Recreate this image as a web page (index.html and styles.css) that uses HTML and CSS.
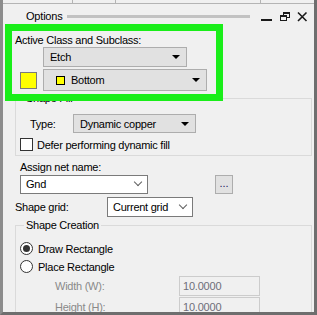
FILE: index.html
```html
<!DOCTYPE html>
<html lang="en">
<head>
    <meta charset="UTF-8">
    <title>Options</title>
    <link rel="stylesheet" href="styles.css">
</head>
<body>
    <div class="window">
        <div class="top-strip">
            <span class="tick tick-a"></span>
            <span class="tick tick-b"></span>
            <span class="tick tick-c"></span>
        </div>

        <div class="titlebar">
            <span class="title">Options</span>
            <span class="grip"></span>
            <svg class="win-buttons" width="47" height="24" viewBox="0 0 47 24">
                <!-- minimize -->
                <rect x="0" y="15" width="11" height="2" fill="#1a1a1a"/>
                <!-- restore -->
                <rect x="22.5" y="8.5" width="6" height="5" fill="none" stroke="#1a1a1a"/>
                <rect x="22" y="8" width="7" height="2" fill="#1a1a1a"/>
                <rect x="19.5" y="11.5" width="6" height="5" fill="#f0f0f0" stroke="#1a1a1a"/>
                <rect x="19" y="11" width="7" height="2" fill="#1a1a1a"/>
                <!-- close -->
                <path d="M37 8.5 L45.5 17 M45.5 8.5 L37 17" stroke="#1a1a1a" stroke-width="1.6" fill="none"/>
            </svg>
        </div>

        <div class="panel">
            <div class="label active-label">Active Class and Subclass:</div>

            <div class="row class-row">
                <div class="dropdown dd-class">
                    <span class="dd-text">Etch</span>
                    <span class="arrow"></span>
                </div>
            </div>

            <div class="row subclass-row">
                <span class="swatch"></span>
                <div class="dropdown dd-subclass">
                    <span class="mini-swatch"></span>
                    <span class="dd-text">Bottom</span>
                    <span class="arrow"></span>
                </div>
            </div>

            <fieldset class="group group-fill">
                <legend>Shape Fill</legend>
                <div class="row type-row">
                    <span class="label type-label">Type:</span>
                    <div class="dropdown dd-type">
                        <span class="dd-text">Dynamic copper</span>
                        <span class="arrow"></span>
                    </div>
                </div>
                <div class="row check-row">
                    <span class="checkbox"></span>
                    <span class="label">Defer performing dynamic fill</span>
                </div>
            </fieldset>

            <div class="label net-label">Assign net name:</div>
            <div class="row net-row">
                <div class="combo combo-net">
                    <span class="dd-text">Gnd</span>
                    <span class="chevron"></span>
                </div>
                <div class="dots-btn">...</div>
            </div>

            <div class="row grid-row">
                <span class="label grid-label">Shape grid:</span>
                <div class="combo combo-grid">
                    <span class="dd-text">Current grid</span>
                    <span class="chevron"></span>
                </div>
            </div>

            <fieldset class="group group-create">
                <legend>Shape Creation</legend>
                <div class="row radio-row first-radio">
                    <span class="radio checked"></span>
                    <span class="label">Draw Rectangle</span>
                </div>
                <div class="row radio-row">
                    <span class="radio"></span>
                    <span class="label">Place Rectangle</span>
                </div>
                <div class="row size-row first-size">
                    <span class="label disabled size-label">Width (W):</span>
                    <div class="textbox">10.0000</div>
                </div>
                <div class="row size-row">
                    <span class="label disabled size-label">Height (H):</span>
                    <div class="textbox">10.0000</div>
                </div>
            </fieldset>
        </div>

        <div class="highlight"></div>
    </div>
</body>
</html>
```

FILE: styles.css
```css
body {
    margin: 0;
    padding: 0;
    background: #f0f0f0;
    font-family: 'Liberation Sans', Arial, sans-serif;
    font-size: 11px;
    color: #000;
}

.window {
    position: relative;
    width: 317px;
    height: 315px;
    box-sizing: border-box;
    border-left: 3px solid #8c8c8c;
    border-right: 3px solid #6e6e6e;
    border-bottom: 3px solid #6e6e6e;
    background: #f0f0f0;
    overflow: hidden;
}

.top-strip {
    position: relative;
    height: 3px;
    border-bottom: 1px solid #b4b4b4;
}

.tick {
    position: absolute;
    top: 0;
    width: 1px;
    height: 3px;
    background: #b4b4b4;
}

.tick-a { left: 69px; }
.tick-b { left: 112px; }
.tick-c { left: 257px; }

.titlebar {
    display: flex;
    align-items: center;
    height: 24px;
    padding-left: 23px;
}

.title {
    line-height: 14px;
    letter-spacing: -0.2px;
}

.grip {
    width: 183px;
    height: 3px;
    margin-left: 4px;
    background: #c2c2c2;
}

.win-buttons {
    margin-left: 11px;
}

.panel {
    display: flex;
    flex-direction: column;
}

.label {
    line-height: 14px;
    white-space: nowrap;
    letter-spacing: -0.25px;
}

.row {
    display: flex;
    align-items: center;
}

.active-label {
    margin: 5px 0 0 12px;
}

.dropdown {
    display: flex;
    align-items: center;
    box-sizing: border-box;
    background: #e1e1e1;
    border: 1px solid #adadad;
    padding: 0 6px;
}

.dd-text {
    flex: 1;
    white-space: nowrap;
    letter-spacing: -0.25px;
}

.arrow {
    width: 0;
    height: 0;
    border-left: 4px solid transparent;
    border-right: 4px solid transparent;
    border-top: 4px solid #000;
}

.dd-class {
    width: 144px;
    height: 20px;
    margin-left: 40px;
}

.subclass-row {
    height: 22px;
    margin-top: 2px;
    margin-left: 17px;
}

.swatch {
    width: 17px;
    height: 17px;
    box-sizing: border-box;
    background: #ffff00;
    border: 1px solid #7a7a7a;
}

.dd-subclass {
    width: 164px;
    height: 22px;
    margin-left: 6px;
    padding-left: 12px;
}

.mini-swatch {
    width: 9px;
    height: 9px;
    box-sizing: border-box;
    background: #ffff00;
    border: 1px solid #000;
    margin-right: 6px;
}

.group {
    margin: 0 2px 0 12px;
    padding: 0 0 3px 4px;
    border: 1px solid #dadada;
    min-width: 0;
}

.group legend {
    padding: 0 2px;
    margin-left: 4px;
    line-height: 14px;
    letter-spacing: -0.25px;
}

.type-row {
    height: 19px;
    margin-top: 9px;
    padding-left: 10px;
}

.type-label {
    width: 43px;
}

.dd-type {
    width: 123px;
    height: 19px;
}

.check-row {
    height: 15px;
    margin-top: 4px;
}

.checkbox,
.radio {
    width: 13px;
    height: 13px;
    box-sizing: border-box;
    border: 1px solid #333;
    background: #fff;
    margin-right: 4px;
    flex: none;
}

.radio {
    position: relative;
    border-radius: 50%;
    margin-right: 5px;
}

.radio.checked::after {
    content: '';
    position: absolute;
    left: 2px;
    top: 2px;
    width: 7px;
    height: 7px;
    border-radius: 50%;
    background: #333;
}

.net-label {
    margin: 4px 0 0 17px;
}

.net-row {
    margin-left: 17px;
    height: 20px;
}

.combo {
    display: flex;
    align-items: center;
    box-sizing: border-box;
    background: #fff;
    border: 1px solid #7a7a7a;
    padding: 0 6px 0 5px;
}

.chevron {
    width: 5px;
    height: 5px;
    border-right: 1px solid #606060;
    border-bottom: 1px solid #606060;
    transform: translateY(-2px) rotate(45deg);
}

.combo-net {
    width: 128px;
    height: 19px;
}

.dots-btn {
    width: 18px;
    height: 19px;
    box-sizing: border-box;
    margin-left: 67px;
    border: 1px solid #adadad;
    background: #e1e1e1;
    text-align: center;
    line-height: 15px;
    color: #1a1a5a;
}

.grid-row {
    height: 20px;
    margin: 3px 0 0 12px;
}

.grid-label {
    width: 92px;
}

.combo-grid {
    width: 86px;
    height: 20px;
}

.group-create {
    margin-top: 1px;
}

.first-radio {
    margin-top: 9px;
}

.radio-row {
    height: 15px;
}

.radio-row + .radio-row {
    margin-top: 3px;
}

.size-row {
    height: 20px;
    margin-top: 1px;
}

.first-size {
    margin-top: 2px;
}

.size-label {
    width: 124px;
    padding-left: 35px;
}

.disabled {
    color: #8a8a8a;
}

.textbox {
    width: 81px;
    height: 20px;
    box-sizing: border-box;
    border: 1px solid #cccccc;
    background: #f0f0f0;
    color: #6e6e7a;
    padding-left: 3px;
    line-height: 18px;
    letter-spacing: -0.2px;
}

.highlight {
    position: absolute;
    left: 2px;
    top: 24px;
    width: 218px;
    height: 77px;
    box-sizing: border-box;
    border: 7px solid #19ee19;
}
```
